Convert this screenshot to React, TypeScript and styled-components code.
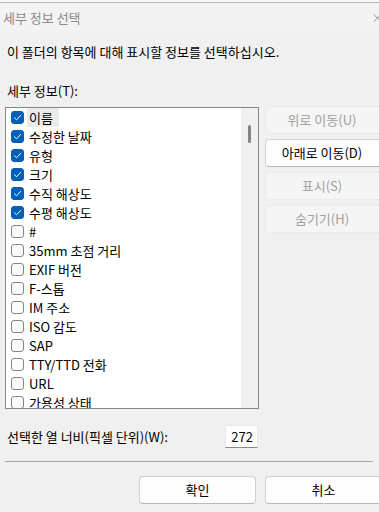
import React from "react";
import styled, { createGlobalStyle } from "styled-components";

const GlobalStyle = createGlobalStyle`
  html, body {
    margin: 0;
    padding: 0;
    background: #f0f0f0;
    overflow: hidden;
  }
  body {
    font-family: "Noto Sans CJK KR", "Noto Sans", sans-serif;
    font-size: 13px;
    color: #000;
  }
`;

const Dialog = styled.div`
  width: 379px;
  height: 512px;
  display: flex;
  flex-direction: column;
  background: #f0f0f0;
  overflow: hidden;
`;

const BackStrip = styled.div`
  height: 2px;
  background: #fafafa;
  border-bottom: 1px solid #b8b8b8;
`;

const TitleBar = styled.div`
  height: 29px;
  display: flex;
  align-items: center;
  justify-content: space-between;
  padding-left: 3px;
  background: #f3f3f3;
  color: #8a8a8a;
  font-size: 13px;
`;

const Close = styled.span`
  width: 10px;
  margin-right: -4px;
  overflow: hidden;
  display: flex;
`;

const Body = styled.div`
  display: flex;
  flex-direction: column;
  padding: 0 0 0 5px;
`;

const Text = styled.div<{ $top: number }>`
  margin-top: ${p => p.$top}px;
  padding-left: 2px;
  line-height: 16px;
  height: 16px;
  white-space: nowrap;
`;

const Main = styled.div`
  margin-top: 8px;
  display: flex;
  gap: 6px;
  align-items: flex-start;
`;

const ListBox = styled.div`
  width: 252px;
  height: 300px;
  flex-shrink: 0;
  border: 1px solid #828790;
  background: #fff;
  display: flex;
  overflow: hidden;
`;

const Items = styled.div`
  flex: 1;
  display: flex;
  flex-direction: column;
  padding-left: 5px;
`;

const Row = styled.div`
  height: 19px;
  flex: 0 0 19px;
  display: flex;
  align-items: center;
  gap: 3px;
`;

const Box = styled.span<{ $checked: boolean }>`
  width: 13px;
  height: 13px;
  box-sizing: border-box;
  border-radius: 3px;
  flex: 0 0 13px;
  display: flex;
  align-items: center;
  justify-content: center;
  background: ${p => (p.$checked ? "#005fb8" : "#fbfbfb")};
  border: 1px solid ${p => (p.$checked ? "#005fb8" : "#858585")};
`;

const Label = styled.span<{ $focus?: boolean }>`
  padding: 0 2px;
  height: 19px;
  line-height: 19px;
  white-space: nowrap;
  background: ${p => (p.$focus ? "#ebebeb" : "transparent")};
  min-width: ${p => (p.$focus ? "28px" : "0")};
`;

const ScrollTrack = styled.div`
  width: 17px;
  flex-shrink: 0;
  background: #f0f0f0;
  display: flex;
  justify-content: center;
  padding-top: 17px;
  box-sizing: border-box;
`;

const Thumb = styled.div`
  width: 3px;
  height: 18px;
  border-radius: 1.5px;
  background: #858585;
`;

const Side = styled.div`
  display: flex;
  flex-direction: column;
  gap: 5px;
  margin-top: -1px;
  flex-shrink: 0;
  width: 120px;
`;

const Button = styled.button<{ $disabled?: boolean }>`
  box-sizing: border-box;
  height: 28px;
  border-radius: 4px;
  border: 1px solid ${p => (p.$disabled ? "#ebebeb" : "#d0d0d0")};
  border-bottom-color: ${p => (p.$disabled ? "#ebebeb" : "#b8b8b8")};
  background: ${p => (p.$disabled ? "#f5f5f5" : "#fdfdfd")};
  color: ${p => (p.$disabled ? "#a0a0a0" : "#000")};
  font-family: inherit;
  font-size: 13px;
  padding: 0 0 1px;
  flex-shrink: 0;
`;

const SideButton = styled(Button)`
  width: 120px;
  padding-right: 6px;
`;

const WidthRow = styled.div`
  margin-top: 16px;
  display: flex;
  align-items: center;
  width: 251px;
  justify-content: space-between;
  padding-left: 2px;
`;

const NumberBox = styled.div`
  width: 33px;
  height: 23px;
  box-sizing: border-box;
  background: #fff;
  border: 1px solid #e8e8e8;
  border-bottom-color: #8a8a8a;
  text-align: right;
  padding-right: 4px;
  line-height: 21px;
`;

const Separator = styled.div`
  margin-top: 13px;
  width: 368px;
  height: 1px;
  background: #a8a8a8;
`;

const Footer = styled.div`
  margin-top: 14px;
  display: flex;
  gap: 9px;
  padding-left: 134px;
`;

const FooterButton = styled(Button)`
  width: 117px;
`;

const CheckMark: React.FC = () => (
  <svg width="9" height="9" viewBox="0 0 9 9" fill="none">
    <path d="M1.5 4.8 L3.6 6.8 L7.6 2.4" stroke="#fff" strokeWidth="1" strokeLinecap="round" strokeLinejoin="round" />
  </svg>
);

const items: { name: string; checked: boolean }[] = [
  { name: "이름", checked: true },
  { name: "수정한 날짜", checked: true },
  { name: "유형", checked: true },
  { name: "크기", checked: true },
  { name: "수직 해상도", checked: true },
  { name: "수평 해상도", checked: true },
  { name: "#", checked: false },
  { name: "35mm 초점 거리", checked: false },
  { name: "EXIF 버전", checked: false },
  { name: "F-스톱", checked: false },
  { name: "IM 주소", checked: false },
  { name: "ISO 감도", checked: false },
  { name: "SAP", checked: false },
  { name: "TTY/TTD 전화", checked: false },
  { name: "URL", checked: false },
  { name: "가용성 상태", checked: false },
];

export default function App() {
  return (
    <Dialog>
      <GlobalStyle />
      <BackStrip />
      <TitleBar>
        <span>세부 정보 선택</span>
        <Close>
          <svg width="14" height="12" viewBox="0 0 14 12">
            <path d="M1 1 L11 11 M11 1 L1 11" stroke="#6a6a6a" strokeWidth="1" />
          </svg>
        </Close>
      </TitleBar>
      <Body>
        <Text $top={12}>이 폴더의 항목에 대해 표시할 정보를 선택하십시오.</Text>
        <Text $top={23}>세부 정보(T):</Text>
        <Main>
          <ListBox>
            <Items>
              {items.map((item, i) => (
                <Row key={item.name}>
                  <Box $checked={item.checked}>{item.checked && <CheckMark />}</Box>
                  <Label $focus={i === 0}>{item.name}</Label>
                </Row>
              ))}
            </Items>
            <ScrollTrack>
              <Thumb />
            </ScrollTrack>
          </ListBox>
          <Side>
            <SideButton $disabled>위로 이동(U)</SideButton>
            <SideButton>아래로 이동(D)</SideButton>
            <SideButton $disabled>표시(S)</SideButton>
            <SideButton $disabled>숨기기(H)</SideButton>
          </Side>
        </Main>
        <WidthRow>
          <span>선택한 열 너비(픽셀 단위)(W):</span>
          <NumberBox>272</NumberBox>
        </WidthRow>
        <Separator />
        <Footer>
          <FooterButton>확인</FooterButton>
          <FooterButton>취소</FooterButton>
        </Footer>
      </Body>
    </Dialog>
  );
}
